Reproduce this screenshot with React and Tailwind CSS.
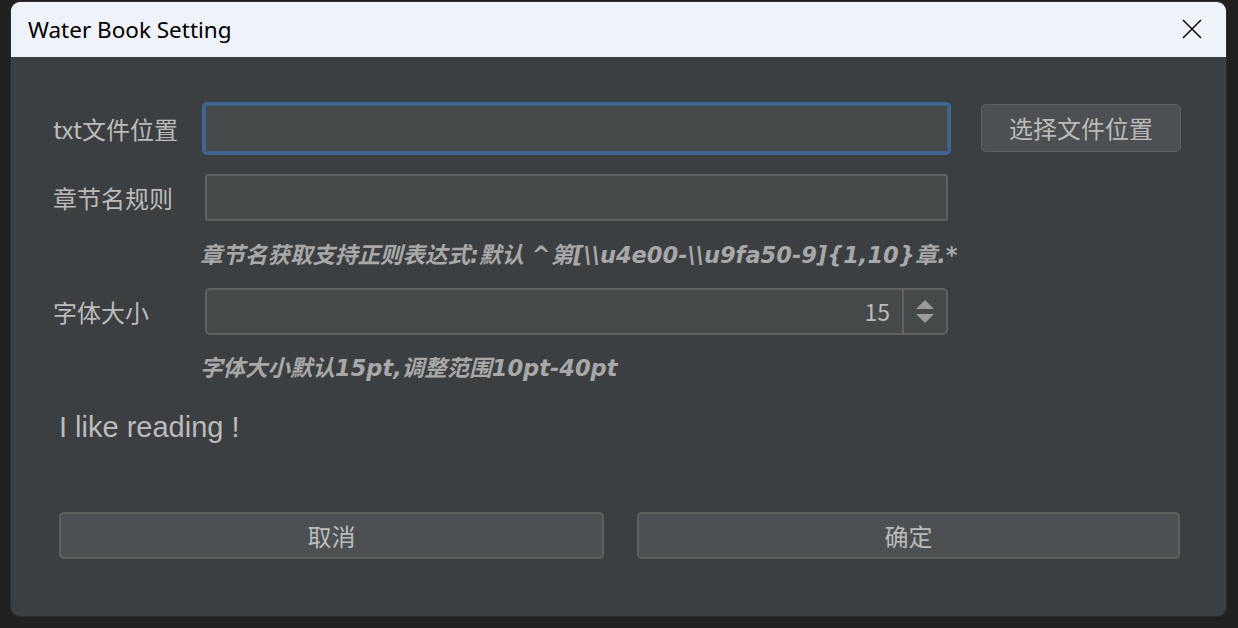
import React from "react";

const cjk = "font-['Noto_Sans_CJK_SC','Noto_Sans',sans-serif]";
const hintFont = "font-['DejaVu_Sans','Noto_Sans_CJK_SC',sans-serif]";

function Label({ children }) {
  return (
    <div className={`w-[152px] shrink-0 text-[24px] leading-none text-[#bbbbbb] ${cjk}`}>
      {children}
    </div>
  );
}

function Hint({ children, className = "" }) {
  return (
    <div
      className={`ml-[147px] h-[30px] flex items-center text-[22.5px] italic font-bold text-[#a8a8a8] whitespace-nowrap ${hintFont} ${className}`}
    >
      {children}
    </div>
  );
}

export default function App() {
  return (
    <div className="w-[1238px] h-[628px] bg-[#202020] pt-[2px] pl-[11px]">
      <div className="w-[1215px] h-[614px] rounded-[9px] overflow-hidden flex flex-col bg-[#3c3f41] shadow-[0_0_0_1px_#2e2e2e]">
        {/* Title bar */}
        <div className="h-[55px] shrink-0 bg-[#eff3f9] flex items-center justify-between pl-[17px] pr-[24px]">
          <span className="text-[22.5px] text-black font-['Noto_Sans',sans-serif]">
            Water Book Setting
          </span>
          <svg width="20" height="20" viewBox="0 0 20 20" className="mt-[-2px]">
            <path d="M1 1 L19 19 M19 1 L1 19" stroke="#111" strokeWidth="1.6" fill="none" />
          </svg>
        </div>

        {/* Body */}
        <div className="flex-1 pl-[42px] flex flex-col">
          {/* Row 1 */}
          <div className="mt-[48px] flex items-center h-[47px]">
            <Label>txt文件位置</Label>
            <div className="w-[743px] h-[47px] bg-[#45494a] border border-[#3f5f80] outline-[3px] outline-solid outline-[#3d6790] rounded-[2px]" />
            <button
              className={`ml-[33px] w-[200px] h-[48px] -mt-[1px] bg-[#4c5052] border border-[#5e6060] rounded-[5px] text-[24px] text-[#bbbbbb] ${cjk}`}
            >
              选择文件位置
            </button>
          </div>

          {/* Row 2 */}
          <div className="mt-[22px] flex items-center h-[47px]">
            <Label>章节名规则</Label>
            <div className="w-[743px] h-[47px] bg-[#45494a] border-2 border-[#5f6163] rounded-[3px]" />
          </div>

          <Hint className="mt-[20px]">章节名获取支持正则表达式:默认 ^第[\\u4e00-\\u9fa50-9]{"{1,10}"}章.*</Hint>

          {/* Row 3 */}
          <div className="mt-[17px] flex items-center h-[47px]">
            <Label>字体大小</Label>
            <div className="w-[743px] h-[47px] bg-[#45494a] border-2 border-[#5f6163] rounded-[5px] flex">
              <div className={`flex-1 flex items-center justify-end pr-[12px] text-[23px] text-[#bbbbbb] ${cjk}`}>
                15
              </div>
              <div className="w-[44px] border-l-2 border-[#5f6163] flex flex-col items-center justify-center gap-[5px]">
                <svg width="18" height="9" viewBox="0 0 18 9">
                  <path d="M9 0 L18 9 L0 9 Z" fill="#9a9a9a" />
                </svg>
                <svg width="18" height="9" viewBox="0 0 18 9">
                  <path d="M0 0 L18 0 L9 9 Z" fill="#9a9a9a" />
                </svg>
              </div>
            </div>
          </div>

          <Hint className="mt-[19px]">字体大小默认15pt,调整范围10pt-40pt</Hint>

          <div className="mt-[26px] ml-[6px] h-[36px] flex items-center text-[29px] text-[#bbbbbb] font-['Liberation_Sans',Arial,sans-serif]">
            I like reading !
          </div>

          {/* Buttons */}
          <div className="mt-[66px] ml-[6px] flex gap-[33px]">
            <button
              className={`w-[545px] h-[47px] bg-[#4c5052] border-2 border-[#5e6060] rounded-[5px] text-[24px] text-[#bbbbbb] ${cjk}`}
            >
              取消
            </button>
            <button
              className={`w-[543px] h-[47px] bg-[#4c5052] border-2 border-[#5e6060] rounded-[5px] text-[24px] text-[#bbbbbb] ${cjk}`}
            >
              确定
            </button>
          </div>
        </div>
      </div>
    </div>
  );
}
